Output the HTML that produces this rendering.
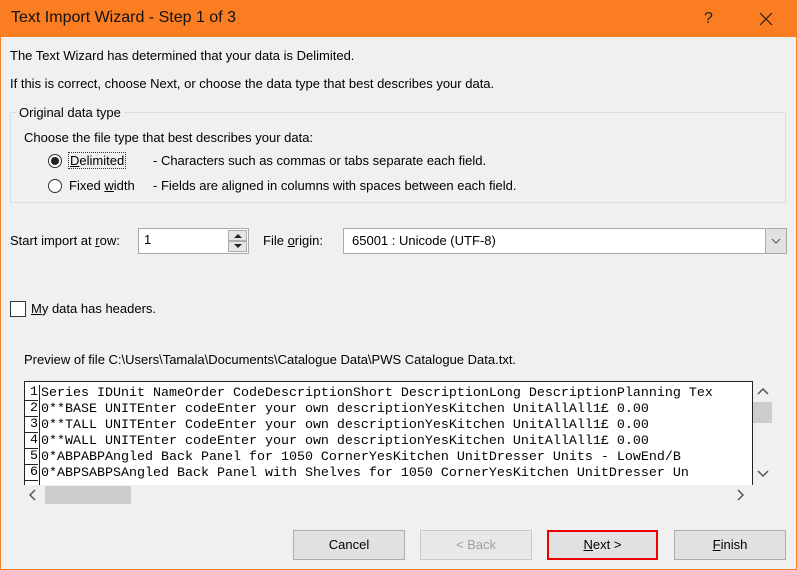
<!DOCTYPE html>
<html><head><meta charset="utf-8"><style>
*{box-sizing:border-box;margin:0;padding:0}
body{width:797px;height:570px;overflow:hidden;background:#f0f0f0;font-family:"Liberation Sans",sans-serif;font-size:13px;color:#000;position:relative}
.abs{position:absolute;white-space:nowrap}
#win{position:absolute;left:0;top:0;width:797px;height:570px;border:1px solid #f58025;border-top:none}
#title{position:absolute;left:0;top:0;width:797px;height:37px;background:#fb7d22}
u{text-decoration:underline}
.btn{position:absolute;top:530px;height:30px;background:#e1e1e1;border:1px solid #adadad;text-align:center;line-height:28px;font-size:13px}
.mono{font-family:"Liberation Mono",monospace;font-size:13.33px;line-height:16px}
.ln div{height:16px;border-bottom:1px solid #222;line-height:16px}
</style></head><body>
<div id="win"></div>
<div id="title"></div>
<div class="abs" style="left:11px;top:9px;font-size:16px;color:#111">Text Import Wizard - Step 1 of 3</div>
<div class="abs" style="left:704px;top:10px;font-size:16px;color:#222">?</div>
<svg class="abs" style="left:759px;top:12px" width="14" height="14"><path d="M1 1L13 13M13 1L1 13" stroke="#222" stroke-width="1.2"/></svg>

<div class="abs" style="left:10px;top:48px">The Text Wizard has determined that your data is Delimited.</div>
<div class="abs" style="left:10px;top:76px">If this is correct, choose Next, or choose the data type that best describes your data.</div>

<div class="abs" style="left:10px;top:112px;width:776px;height:91px;border:1px solid #dcdcdc"></div>
<div class="abs" style="left:16px;top:105px;background:#f0f0f0;padding:0 3px">Original data type</div>
<div class="abs" style="left:24px;top:130px">Choose the file type that best describes your data:</div>
<div class="abs" style="left:48px;top:154px;width:14px;height:14px;border:1px solid #333;border-radius:50%;background:#fff"></div>
<div class="abs" style="left:51px;top:157px;width:8px;height:8px;border-radius:50%;background:#222"></div>
<div class="abs" style="left:68px;top:152px;border:1px dotted #333;padding:0 1px;line-height:15px"><u>D</u>elimited</div>
<div class="abs" style="left:153px;top:153px">- Characters such as commas or tabs separate each field.</div>
<div class="abs" style="left:48px;top:179px;width:14px;height:14px;border:1px solid #333;border-radius:50%;background:#fff"></div>
<div class="abs" style="left:69px;top:178px">Fixed <u>w</u>idth</div>
<div class="abs" style="left:153px;top:178px">- Fields are aligned in columns with spaces between each field.</div>

<div class="abs" style="left:10px;top:233px">Start import at <u>r</u>ow:</div>
<div class="abs" style="left:138px;top:228px;width:111px;height:26px;border:1px solid #aaa;background:#fff"></div>
<div class="abs" style="left:144px;top:232px">1</div>
<div class="abs" style="left:228px;top:230px;width:19px;height:11px;background:#e5e5e5;border:1px solid #adadad"></div>
<div class="abs" style="left:228px;top:241px;width:19px;height:11px;background:#e5e5e5;border:1px solid #adadad"></div>
<svg class="abs" style="left:233px;top:232px" width="10" height="18"><path d="M1 6L5 2L9 6Z M1 12L5 16L9 12Z" fill="#222"/></svg>
<div class="abs" style="left:263px;top:233px">File <u>o</u>rigin:</div>
<div class="abs" style="left:343px;top:228px;width:444px;height:26px;border:1px solid #aaa;background:#fff"></div>
<div class="abs" style="left:352px;top:233px">65001 : Unicode (UTF-8)</div>
<div class="abs" style="left:765px;top:229px;width:21px;height:24px;background:#e1e1e1;border-left:1px solid #adadad"></div>
<svg class="abs" style="left:771px;top:238px" width="10" height="6"><path d="M1 1L5 5L9 1" stroke="#555" fill="none"/></svg>

<div class="abs" style="left:10px;top:301px;width:16px;height:16px;border:1px solid #333;background:#fff"></div>
<div class="abs" style="left:31px;top:301px"><u>M</u>y data has headers.</div>

<div class="abs" style="left:24px;top:352px">Preview of file C:\Users\Tamala\Documents\Catalogue Data\PWS Catalogue Data.txt.</div>

<div class="abs" style="left:24px;top:381px;width:729px;height:104px;border:1px solid #222;border-bottom:none;background:#fff;overflow:hidden">
<div class="abs mono ln" style="left:0;top:3px;width:15px;border-right:1px solid #222;text-align:right;padding-right:1px;height:110px">
<div>1</div><div>2</div><div>3</div><div>4</div><div>5</div><div>6</div></div>
<div class="abs mono" style="left:16px;top:4px">Series IDUnit NameOrder CodeDescriptionShort DescriptionLong DescriptionPlanning Tex<br>0**BASE UNITEnter codeEnter your own descriptionYesKitchen UnitAllAll1£ 0.00<br>0**TALL UNITEnter CodeEnter your own descriptionYesKitchen UnitAllAll1£ 0.00<br>0**WALL UNITEnter codeEnter your own descriptionYesKitchen UnitAllAll1£ 0.00<br>0*ABPABPAngled Back Panel for 1050 CornerYesKitchen UnitDresser Units - LowEnd/B<br>0*ABPSABPSAngled Back Panel with Shelves for 1050 CornerYesKitchen UnitDresser Un</div>
</div>
<div class="abs" style="left:753px;top:402px;width:19px;height:21px;background:#cdcdcd"></div>
<svg class="abs" style="left:757px;top:388px" width="12" height="8"><path d="M1 6L6 1L11 6" stroke="#555" stroke-width="1.5" fill="none"/></svg>
<svg class="abs" style="left:757px;top:470px" width="12" height="8"><path d="M1 1L6 6L11 1" stroke="#555" stroke-width="1.5" fill="none"/></svg>
<div class="abs" style="left:45px;top:486px;width:86px;height:18px;background:#cdcdcd"></div>
<svg class="abs" style="left:29px;top:489px" width="8" height="12"><path d="M6 1L1 6L6 11" stroke="#555" stroke-width="1.5" fill="none"/></svg>
<svg class="abs" style="left:737px;top:489px" width="8" height="12"><path d="M1 1L6 6L1 11" stroke="#555" stroke-width="1.5" fill="none"/></svg>

<div class="btn" style="left:293px;width:112px">Cancel</div>
<div class="btn" style="left:420px;width:112px;color:#a0a0a0;border-color:#c8c8c8;background:#e8e8e8">&lt; Back</div>
<div class="btn" style="left:547px;width:111px;border:2px solid #e00;line-height:26px"><u>N</u>ext &gt;</div>
<div class="btn" style="left:674px;width:112px"><u>F</u>inish</div>
</body></html>
